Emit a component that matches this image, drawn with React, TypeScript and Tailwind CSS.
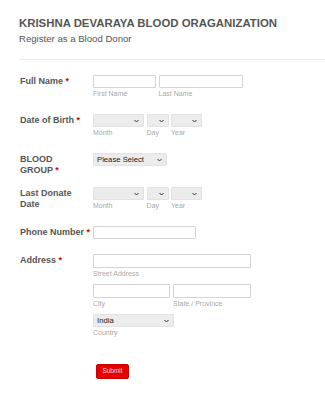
import type { ReactNode } from 'react'

const font = { fontFamily: '"Liberation Sans", Arial, sans-serif' }

function Chevron() {
  return (
    <svg className="w-[5px] h-[4px] shrink-0" viewBox="0 0 10 7" fill="none">
      <path d="M1 1.5l4 4 4-4" stroke="#333" strokeWidth="2" />
    </svg>
  )
}

function Select({ width, text }: { width: string; text?: string }) {
  return (
    <div
      className={`${width} h-[13px] flex items-center justify-between pl-[3px] pr-[4px] bg-[#ececec] border border-[#e2e2e2] rounded-[1px]`}
    >
      <span className="text-[7.7px] text-[#222] leading-none">{text}</span>
      <Chevron />
    </div>
  )
}

function Input({ width, height = 'h-[13px]' }: { width: string; height?: string }) {
  return <div className={`${width} ${height} bg-white border border-[#d4d4d4] rounded-[1px]`} />
}

function Sub({ children, width }: { children: ReactNode; width?: string }) {
  return <div className={`${width ?? ''} text-[7px] leading-[9px] mt-[1px] text-[#a8a8a8]`}>{children}</div>
}

function Label({ children, required }: { children: ReactNode; required?: boolean }) {
  return (
    <div className="w-[73px] shrink-0 mt-[1px] text-[9px] leading-[11px] font-bold text-[#555]">
      {children}
      {required && <span className="text-[#e00000]"> *</span>}
    </div>
  )
}

function DateFields() {
  return (
    <div className="flex gap-[2.5px]">
      <div>
        <Select width="w-[51px]" />
        <Sub>Month</Sub>
      </div>
      <div>
        <Select width="w-[22px]" />
        <Sub>Day</Sub>
      </div>
      <div>
        <Select width="w-[31px]" />
        <Sub>Year</Sub>
      </div>
    </div>
  )
}

export default function App() {
  return (
    <div className="w-[325px] h-[400px] bg-white overflow-hidden" style={font}>
      {/* Header */}
      <div className="pl-[19px] pt-[16px]">
        <h1 className="text-[11.4px] leading-[14px] font-bold text-[#555]">KRISHNA DEVARAYA BLOOD ORAGANIZATION</h1>
        <p className="mt-[3px] text-[9.6px] leading-[12px] text-[#555]">Register as a Blood Donor</p>
        <div className="mt-[14px] h-px bg-[#ececec]" />
      </div>

      <div className="pl-[20px]">
        {/* Full Name */}
        <div className="flex mt-[15px] h-[24px]">
          <Label required>Full Name</Label>
          <div className="flex gap-[2.5px]">
            <div>
              <Input width="w-[63px]" />
              <Sub>First Name</Sub>
            </div>
            <div>
              <Input width="w-[84px]" />
              <Sub>Last Name</Sub>
            </div>
          </div>
        </div>

        {/* Date of Birth */}
        <div className="flex mt-[15px] h-[24px]">
          <Label required>Date of Birth</Label>
          <DateFields />
        </div>

        {/* Blood Group */}
        <div className="flex mt-[15px] h-[24px]">
          <Label required>
            BLOOD
            <br />
            GROUP
          </Label>
          <Select width="w-[74px]" text="Please Select" />
        </div>

        {/* Last Donate Date */}
        <div className="flex mt-[10px] h-[24px]">
          <Label>
            Last Donate
            <br />
            Date
          </Label>
          <DateFields />
        </div>

        {/* Phone */}
        <div className="flex mt-[15px]">
          <Label required>Phone Number</Label>
          <Input width="w-[103px]" />
        </div>

        {/* Address */}
        <div className="flex mt-[15px]">
          <Label required>Address</Label>
          <div>
            <Input width="w-[158px]" height="h-[14px]" />
            <Sub>Street Address</Sub>
            <div className="flex gap-[3px] mt-[6px]">
              <div>
                <Input width="w-[77px]" height="h-[14px]" />
                <Sub>City</Sub>
              </div>
              <div>
                <Input width="w-[78px]" height="h-[14px]" />
                <Sub>State / Province</Sub>
              </div>
            </div>
            <div className="mt-[6px]">
              <Select width="w-[81px]" text="India" />
              <Sub>Country</Sub>
            </div>
          </div>
        </div>

        {/* Submit */}
        <div className="pl-[76px] mt-[19px]">
          <button className="w-[33px] h-[15px] bg-[#e60000] border border-[#c40000] rounded-[2px] text-[6.5px] text-[#ffd6d6] leading-none">
            Submit
          </button>
        </div>
      </div>
    </div>
  )
}
